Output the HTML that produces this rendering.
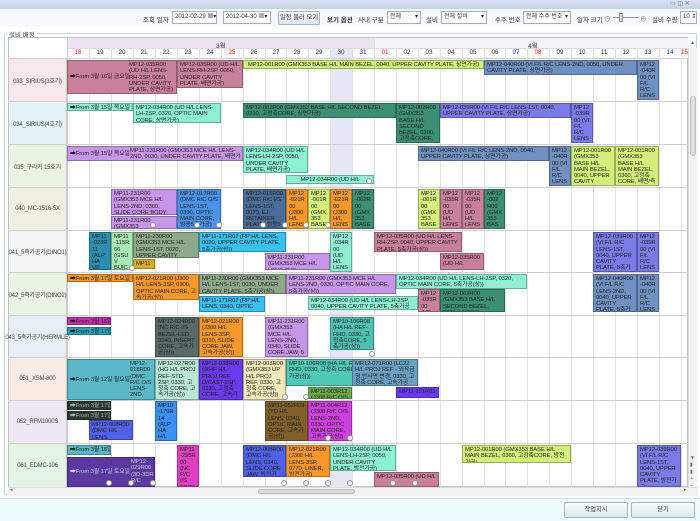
<!DOCTYPE html>
<html><head><meta charset="utf-8">
<style>
*{margin:0;padding:0;box-sizing:border-box}
body{width:700px;height:521px;overflow:hidden;background:#fff;font-family:"Liberation Sans","Noto Sans CJK KR",sans-serif;position:relative;color:#333}
.a{position:absolute}
.t{font-size:6.5px;white-space:nowrap}
.b{position:absolute;border:1px solid rgba(0,0,0,.28);font-size:5.9px;line-height:6.3px;padding:1px 2px 0;overflow:hidden;color:#222;overflow-wrap:anywhere;letter-spacing:-0.1px}
.vl{position:absolute;top:48px;height:439px;width:1px;background:#e2e2e2}
.hl{position:absolute;left:8px;width:680px;height:1px;background:#cfcfcf}
.lab{position:absolute;left:9px;width:58px;font-size:6px;display:flex;align-items:center;justify-content:center;color:#444;border-right:1px solid #ccc;white-space:nowrap;letter-spacing:-0.2px}
.dn{position:absolute;top:48px;height:10px;width:22px;font-size:6.3px;text-align:center;line-height:10px}
.inp{position:absolute;top:11px;height:13px;border:1px solid #aab;background:#fff;font-size:6px;line-height:11px;padding-left:2px;white-space:nowrap;overflow:hidden}
.btn{position:absolute;border:1px solid #a8b4c4;background:linear-gradient(#fafcff,#dde6f0);font-size:6.3px;text-align:center;border-radius:2px;white-space:nowrap;overflow:hidden}
.d{position:absolute;width:6px;height:6px;border-radius:50%;background:#fff;border:1px solid #999}
</style></head><body>
<div class="a" style="left:0;top:0;width:700px;height:9px;background:linear-gradient(#d6e2f0,#c2d2e6)"></div>
<div class="a t" style="left:670px;top:0;font-size:6px;color:#777">▭ ◫ ✕</div>
<div class="a" style="left:0;top:9px;width:700px;height:18px;background:#f7f9fc"></div>
<div class="a t" style="left:143px;top:14px">조회 일자</div>
<div class="inp" style="left:172px;width:45px">2012-02-29 ▦▾</div>
<div class="inp" style="left:223px;width:48px">2012-04-30 ▦▾</div>
<div class="btn" style="left:278px;top:11px;width:42px;height:14px;line-height:12px">일정 불러 오기</div>
<div class="a t" style="left:327px;top:14px;font-weight:bold">보기 옵션</div>
<div class="a t" style="left:358px;top:14px">사내 구분</div>
<div class="inp" style="left:387px;width:34px">전체 <span style="position:absolute;right:2px">▾</span></div>
<div class="a t" style="left:426px;top:14px">설비</div>
<div class="inp" style="left:441px;width:46px">전체 설비 <span style="position:absolute;right:2px">▾</span></div>
<div class="a t" style="left:495px;top:14px">수주 번호</div>
<div class="inp" style="left:523px;width:48px">전체 수주 번호<span style="position:absolute;right:2px">▾</span></div>
<div class="a t" style="left:577px;top:14px">일자 크기</div>
<div class="a t" style="left:604px;top:13px;color:#888">⊖</div>
<div class="a" style="left:613px;top:17px;width:26px;height:1px;background:#999"></div>
<div class="a" style="left:619px;top:13px;width:4px;height:9px;background:#dde;border:1px solid #889"></div>
<div class="a t" style="left:640px;top:13px;color:#888">⊕</div>
<div class="a t" style="left:652px;top:14px">설비 수량</div>
<div class="inp" style="left:680px;width:17px">10 ⇕</div>
<div class="a" style="left:4px;top:33px;width:693px;height:462px;border:1px solid #c8d2dc;border-radius:2px"></div>
<div class="a t" style="left:7px;top:29px;background:#fff;padding:0 2px">설비 배정</div>
<div class="a" style="left:8px;top:37px;width:680px;height:450px;border:1px solid #b8c0c8;background:#fff"></div>
<div class="a" style="left:67px;top:38px;width:307px;height:10px;background:#ece2f4"></div>
<div class="a" style="left:374px;top:38px;width:314px;height:10px;background:#f4f4f8"></div>
<div class="a t" style="left:216px;top:40px">3월</div>
<div class="a t" style="left:528px;top:40px">4월</div>
<div class="a" style="left:67px;top:48px;width:621px;height:10px;background:#fbfbfb"></div>
<div class="a" style="left:330px;top:48px;width:22px;height:439px;background:#e6e6f6"></div>
<div class="hl" style="top:48px;left:67px;width:621px;background:#ddd"></div>
<div class="hl" style="top:58px"></div>
<div class="vl" style="left:67px;top:38px;height:449px;background:#ccc"></div>
<div class="vl" style="left:89px"></div><div class="vl" style="left:111px"></div><div class="vl" style="left:133px"></div><div class="vl" style="left:155px"></div><div class="vl" style="left:177px"></div><div class="vl" style="left:199px"></div><div class="vl" style="left:221px"></div><div class="vl" style="left:243px"></div><div class="vl" style="left:265px"></div><div class="vl" style="left:286px"></div><div class="vl" style="left:308px"></div><div class="vl" style="left:330px"></div><div class="vl" style="left:352px"></div><div class="vl" style="left:374px;top:38px;height:449px"></div><div class="vl" style="left:396px"></div><div class="vl" style="left:418px"></div><div class="vl" style="left:440px"></div><div class="vl" style="left:462px"></div><div class="vl" style="left:484px"></div><div class="vl" style="left:505px"></div><div class="vl" style="left:527px"></div><div class="vl" style="left:549px"></div><div class="vl" style="left:571px"></div><div class="vl" style="left:593px"></div><div class="vl" style="left:615px"></div><div class="vl" style="left:637px"></div><div class="vl" style="left:659px"></div><div class="vl" style="left:681px"></div>
<div class="dn" style="left:67px;color:#e02020">18</div><div class="dn" style="left:89px">19</div><div class="dn" style="left:111px">20</div><div class="dn" style="left:133px">21</div><div class="dn" style="left:155px">22</div><div class="dn" style="left:177px">23</div><div class="dn" style="left:199px;color:#2020e0">24</div><div class="dn" style="left:221px;color:#e02020">25</div><div class="dn" style="left:243px">26</div><div class="dn" style="left:265px">27</div><div class="dn" style="left:286px">28</div><div class="dn" style="left:308px">29</div><div class="dn" style="left:330px">30</div><div class="dn" style="left:352px;color:#2020e0">31</div><div class="dn" style="left:374px;color:#e02020">01</div><div class="dn" style="left:396px">02</div><div class="dn" style="left:418px">03</div><div class="dn" style="left:440px">04</div><div class="dn" style="left:462px">05</div><div class="dn" style="left:484px">06</div><div class="dn" style="left:505px;color:#2020e0">07</div><div class="dn" style="left:527px;color:#e02020">08</div><div class="dn" style="left:549px">09</div><div class="dn" style="left:571px">10</div><div class="dn" style="left:593px">11</div><div class="dn" style="left:615px">12</div><div class="dn" style="left:637px">13</div><div class="dn" style="left:659px;color:#2020e0">14</div><div class="dn" style="left:681px;color:#e02020;width:7px;overflow:hidden">15</div>
<div class="lab" style="top:59px;height:42px;background:#f8e8ea">033_SIRIUS(3호기)</div>
<div class="lab" style="top:102px;height:42px;background:#e4f2f8">034_SIRIUS(4호기)</div>
<div class="lab" style="top:145px;height:42px;background:#eaf4e2">035_구라커 15호기</div>
<div class="lab" style="top:188px;height:42px;background:#f0f0e2">040_MC-1516-5X</div>
<div class="lab" style="top:231px;height:41px;background:#f4f4f4">041_5축가공기(DINO1)</div>
<div class="lab" style="top:273px;height:42px;background:#eaf4e4">042_5축가공기(DINO2)</div>
<div class="lab" style="top:316px;height:41px;background:#e6f0f4">043_5축가공기(HERMLE)</div>
<div class="lab" style="top:358px;height:42px;background:#f8ece4">051_XSM-800</div>
<div class="lab" style="top:401px;height:42px;background:#eee8f4">052_RFM1000S</div>
<div class="lab" style="top:444px;height:43px;background:#e4f4e4">061_EDMC-106</div>
<div class="hl" style="top:101px"></div><div class="hl" style="top:144px"></div><div class="hl" style="top:187px"></div><div class="hl" style="top:230px"></div><div class="hl" style="top:272px"></div><div class="hl" style="top:315px"></div><div class="hl" style="top:357px"></div><div class="hl" style="top:400px"></div><div class="hl" style="top:443px"></div>

<!-- row 033 -->
<div class="b" style="left:67px;top:60px;width:110px;height:34px;background:#c9819b"><span style="position:absolute;left:2px;top:13px;white-space:nowrap">➡From 3월 16일 금요일</span><span style="position:absolute;left:61px;top:1px;width:47px;background:#c9819b">MP12-035R00 (UD H/L LENS-RH-2SP, 0050, UNDER CAVITY PLATE, 상면가공)</span></div>
<div class="b" style="left:177px;top:60px;width:66px;height:28px;background:#c9819b">MP12-035R00 (UD H/L LENS-RH-2SP, 0050, UNDER CAVITY PLATE, 배면가공)</div>
<div class="b" style="left:243px;top:60px;width:241px;height:9px;background:#d2f07a;text-align:center;white-space:nowrap">MP12-001R00 (GMX353 BASE H/L MAIN BEZEL, 0040, UPPER CAVITY PLATE, 상면가공)</div>
<div class="b" style="left:484px;top:60px;width:153px;height:15px;background:#6f90c0">MP12-040R00 (VI F/L R/C LENS-2ND, 0050, UNDER CAVITY PLATE, 상면가공)</div>
<div class="b" style="left:637px;top:60px;width:22px;height:40px;background:#6f90c0">MP12-040R00 (VI F/L R/C LENS-2ND,</div>
<!-- row 034 -->
<div class="b" style="left:67px;top:103px;width:66px;height:8px;background:#8ef0d2;line-height:6px;white-space:nowrap">➡From 3월 15일 목요일 M</div>
<div class="b" style="left:133px;top:103px;width:88px;height:20px;background:#8ef0d2">MP12-034R00 (UD H/L LENS-LH-2SP, 0320, OPTIC MAIN CORE, 상면가공)</div>
<div class="b" style="left:243px;top:103px;width:153px;height:15px;background:#3c8f72">MP12-002R00 (GMX353 BASE H/L SECOND BEZEL, 0310, 고정축CORE, 상면가공)</div>
<div class="b" style="left:396px;top:103px;width:44px;height:40px;background:#3c8f72">MP12-002R00 (GMX353 BASE H/L SECOND BEZEL, 0300, 고정축CORE, 배면/측면 가공)</div>
<div class="b" style="left:440px;top:103px;width:131px;height:15px;background:#7b7be8">MP12-039R00 (VI F/L R/C LENS-1ST, 0040, UPPER CAVITY PLATE, 상면가공)</div>
<div class="b" style="left:571px;top:103px;width:22px;height:40px;background:#7b7be8">MP12-039R00 (VI F/L R/C LENS-1 ST,</div>
<!-- row 035 -->
<div class="b" style="left:67px;top:146px;width:176px;height:15px;background:#c896e8"><span style="position:absolute;left:2px;top:4px;white-space:nowrap">➡From 3월 15일 목요일</span><span style="position:absolute;left:62px;top:1px;width:112px">MP11-231R00 (GMX353 MCE H/L LENS-2ND, 0030, UNDER CAVITY PLATE, 배면가공)</span></div>
<div class="b" style="left:243px;top:146px;width:65px;height:27px;background:#8ef0d2">MP12-034R00 (UD H/L LENS-LH-2SP, 0050, UNDER CAVITY PLATE, 배면가공)</div>
<div class="b" style="left:286px;top:175px;width:88px;height:9px;background:#8ef0d2;white-space:nowrap;text-align:center">MP12-034R00 (UD H/L</div>
<div class="b" style="left:418px;top:146px;width:131px;height:15px;background:#6f90c0">MP12-040R00 (VI F/L R/C LENS-2ND, 0040, UPPER CAVITY PLATE, 상면가공)</div>
<div class="b" style="left:549px;top:146px;width:22px;height:40px;background:#6f90c0">MP12-040R00 (VI F/L R/C LENS-2ND,</div>
<div class="b" style="left:571px;top:146px;width:44px;height:40px;background:#d2f07a">MP12-001R00 (GMX353 BASE H/L MAIN BEZEL, 0040, UPPER CAVITY PLATE, 배면가</div>
<div class="b" style="left:615px;top:146px;width:44px;height:40px;background:#d2f07a">MP12-001R00 (GMX353 BASE H/L MAIN BEZEL, 0360, 고정축CORE, 배면/측면 가공)</div>
<!-- row 040 -->
<div class="b" style="left:111px;top:189px;width:66px;height:26px;background:#c896e8">MP11-231R00 (GMX353 MCE H/L LENS-2ND, 0360, SLIDE CORE BODY, 범용5축가공)</div>
<div class="b" style="left:111px;top:216px;width:66px;height:13px;background:#c896e8">MP11-231R00 (GMX353</div>
<div class="b" style="left:177px;top:189px;width:44px;height:40px;background:#4a92ea">MP12-017R00 (DMC R/C O/S LENS-1ST, 0330, OPTIC MAIN CORE, 범용5축가공)</div>
<div class="b" style="left:243px;top:189px;width:43px;height:40px;background:#4a6c98">MP12-015R00 (DMC R/C I/S LENS-1ST, 0070, EJ. RETAINER PLATE, 범용5축</div>
<div class="b" style="left:286px;top:189px;width:22px;height:40px;background:#f8982a">MP12-021R00 (J300 H/L LENS-</div>
<div class="b" style="left:308px;top:189px;width:22px;height:40px;background:#d2f07a">MP12-001R00 (GMX353 BASE</div>
<div class="b" style="left:330px;top:189px;width:22px;height:40px;background:#f8982a">MP12-021R00 (J300 H/L LENS-</div>
<div class="b" style="left:352px;top:189px;width:22px;height:40px;background:#3c8f72">MP12-002R00 (GMX353 BASE</div>
<div class="b" style="left:418px;top:189px;width:22px;height:40px;background:#d2f07a">MP12-001R00 (GMX353 BASE</div>
<div class="b" style="left:440px;top:189px;width:22px;height:40px;background:#c9819b">MP12-035R00 (UD H/L LENS-RH-2SP,</div>
<div class="b" style="left:462px;top:189px;width:22px;height:40px;background:#c9819b">MP12-035R00 (UD H/L LENS-RH-2SP,</div>
<div class="b" style="left:484px;top:189px;width:21px;height:40px;background:#3c8f72">MP12-002R00 (GMX353 BASE</div>
<!-- row 041 -->
<div class="b" style="left:89px;top:232px;width:22px;height:38px;background:#2a90b2">MP11-023R11 (ALPHA UP H/L</div>
<div class="b" style="left:111px;top:232px;width:22px;height:38px;background:#a8e8b4">MP11-115R06 (GSUV BUICK H/L</div>
<div class="b" style="left:133px;top:232px;width:66px;height:26px;background:#8eaa8a">MP11-230R00 (GMX353 MCE H/L LENS-1ST, 0020, UPPER CAVITY PLATE, 5축가공(상))</div>
<div class="b" style="left:133px;top:259px;width:22px;height:10px;background:#d8b020">MP11-</div>
<div class="b" style="left:199px;top:232px;width:87px;height:20px;background:#38c0f0">MP11-171R02 (RP H/L LENS, 0020, UPPER CAVITY PLATE, 5축가공(상))</div>
<div class="b" style="left:265px;top:253px;width:65px;height:17px;background:#c896e8">MP11-231R00 (GMX353 MCE H/L LENS-2ND,</div>
<div class="b" style="left:330px;top:232px;width:22px;height:40px;background:#8ef0d2">MP12-034R00 (UD H/L LENS-LH-2SP,</div>
<div class="b" style="left:374px;top:232px;width:88px;height:20px;background:#c9819b">MP12-035R00 (UD H/L LENS-RH-2SP, 0040, UPPER CAVITY PLATE, 5축가공(상))</div>
<div class="b" style="left:440px;top:253px;width:44px;height:17px;background:#c9819b">MP12-035R00 (UD H/L</div>
<div class="b" style="left:593px;top:232px;width:44px;height:40px;background:#7b7be8">MP12-039R00 (VI F/L R/C LENS-1ST, 0040, UPPER CAVITY PLATE, 5축가공(상))</div>
<div class="b" style="left:637px;top:232px;width:22px;height:40px;background:#7b7be8">MP12-039R00 (VI F/L R/C LENS-1 ST,</div>
<!-- row 042 -->
<div class="b" style="left:67px;top:274px;width:66px;height:8px;background:#f8982a;line-height:6px;white-space:nowrap">➡From 3월 17일 토요일 M</div>
<div class="b" style="left:133px;top:274px;width:66px;height:26px;background:#f8982a">MP12-021R00 (J300 H/L LENS-3SP, 0300, OPTIC MAIN CORE, 고속가공(상))</div>
<div class="b" style="left:199px;top:274px;width:87px;height:20px;background:#8eaa8a">MP11-230R00 (GMX353 MCE H/L LENS-1ST, 0030, UNDER CAVITY PLATE, 5축가공(상))</div>
<div class="b" style="left:286px;top:274px;width:110px;height:20px;background:#c896e8">MP11-231R00 (GMX353 MCE H/L LENS-2ND, 0330, OPTIC MAIN CORE, 5축가공(상))</div>
<div class="b" style="left:396px;top:274px;width:131px;height:15px;background:#8ef0d2">MP12-034R00 (UD H/L LENS-LH-2SP, 0320, OPTIC MAIN CORE, 5축가공(상))</div>
<div class="b" style="left:199px;top:296px;width:66px;height:16px;background:#38c0f0">MP11-171R02 (RP H/L LENS, 0340, OPTIC MAIN</div>
<div class="b" style="left:308px;top:296px;width:110px;height:14px;background:#8ef0d2">MP12-034R00 (UD H/L LENS-LH-2SP, 0040, UPPER CAVITY PLATE, 5축가공(상))</div>
<div class="b" style="left:418px;top:289px;width:22px;height:23px;background:#c9819b">MP12-035R00 (UD</div>
<div class="b" style="left:440px;top:289px;width:65px;height:23px;background:#3c8f72">MP12-002R00 (GMX353 BASE H/L SECOND BEZEL, 0031, UNDER</div>
<div class="b" style="left:593px;top:274px;width:44px;height:38px;background:#6f90c0">MP12-040R00 (VI F/L R/C LENS-2ND, 0040, UPPER CAVITY PLATE, 5축가공(상))</div>
<div class="b" style="left:637px;top:274px;width:22px;height:38px;background:#6f90c0">MP12-040R00 (VI F/L R/C LENS-2ND,</div>
<!-- row 043 -->
<div class="b" style="left:67px;top:317px;width:44px;height:8px;background:#c830b0;line-height:6px;white-space:nowrap">➡From 3월 16일</div>
<div class="b" style="left:67px;top:327px;width:44px;height:8px;background:#2aa0b8;line-height:6px;white-space:nowrap">➡From 3월 17일</div>
<div class="b" style="left:155px;top:317px;width:44px;height:40px;background:#5a6a6a">MP12-024R00 (NC R/C I/S BEZEL-LED, 0340, INSERT CORE, 고속가공(상))</div>
<div class="b" style="left:199px;top:317px;width:44px;height:40px;background:#f8982a">MP12-021R00 (J300 H/L LENS-3SP, 0310, SLIDE CORE JAW, 고속가공(상))</div>
<div class="b" style="left:265px;top:317px;width:43px;height:40px;background:#c896e8">MP11-231R00 (GMX353 MCE H/L LENS-2ND, 0340, SLIDE CORE JAW, 5축가공(상))</div>
<div class="b" style="left:330px;top:317px;width:44px;height:33px;background:#50c0b4">MP10-106R08 (HA H/L REF-RHD, 0330, 고정축CORE, 5축가공(상))</div>
<!-- row 051 -->
<div class="b" style="left:67px;top:359px;width:88px;height:41px;background:#5ab8c8"><span style="position:absolute;left:2px;top:17px;white-space:nowrap">➡From 3월 12일 월요일</span><span style="position:absolute;left:62px;top:1px;width:24px;background:#5ab8c8">MP12-018R00 (DMC R/C O/S LENS-2ND, 0330, OPTIC</span></div>
<div class="b" style="left:155px;top:359px;width:44px;height:41px;background:#b8e8d4">MP12-027R00 (HG H/L PROJ REF-STD-2SP, 0330, 고정축 CORE, 고속가공(상))</div>
<div class="b" style="left:199px;top:359px;width:44px;height:41px;background:#6a3af0">MP12-038R00 (J64F H/L PROJ REF D/CAST-2SP, 0330, 고정축 CORE, 고속가공</div>
<div class="b" style="left:243px;top:359px;width:43px;height:41px;background:#f0e8b8">MP12-003R00 (GMX353 UP H/L PROJ REF, 0330, 고정축 CORE, 고속가공(상))</div>
<div class="b" style="left:286px;top:359px;width:88px;height:27px;background:#50c8b8">MP10-106R08 (HA H/L REF-RHD, 0330, 고정축 CORE, 고속가공(상))</div>
<div class="b" style="left:308px;top:387px;width:44px;height:12px;background:#6aa84a">MP11-003R12 (J308 R/C O/S</div>
<div class="b" style="left:352px;top:359px;width:66px;height:27px;background:#6aa0c2">MR12-071R00 (LC22 H/L PROJ REF - 외작금형 반사면 변경, 0330, 고정축 CORE, 고속가공(상))</div>
<div class="b" style="left:396px;top:387px;width:43px;height:11px;background:#6a3af0">MP11-221R01</div>
<!-- row 052 -->
<div class="b" style="left:67px;top:401px;width:44px;height:9px;background:#2a3a30;color:#aaa;white-space:nowrap">➡From 3월 17일</div>
<div class="b" style="left:67px;top:411px;width:44px;height:9px;background:#2a3a30;color:#aaa;white-space:nowrap">➡From 3월 17일</div>
<div class="b" style="left:89px;top:420px;width:44px;height:20px;background:#5060e8">MP12-008R00 (DMC H/L LENS,</div>
<div class="b" style="left:155px;top:401px;width:22px;height:40px;background:#3a90f8">MP10-179R14 (ALPHA H/L LENS-2</div>
<div class="b" style="left:265px;top:401px;width:43px;height:40px;background:#806028">MP11-052R09 (YD H/L LENS, 0340, OPTIC MAIN CORE, 고속가공(상))</div>
<div class="b" style="left:308px;top:401px;width:44px;height:40px;background:#d040e0">MP11-004R12 (J308 R/C O/S LENS-2ND, 0330, OPTIC MAIN CORE, 고속가공(상))</div>
<!-- row 061 -->
<div class="b" style="left:67px;top:445px;width:44px;height:10px;background:#5ab8c8;white-space:nowrap">➡From 3월 16일</div>
<div class="b" style="left:67px;top:457px;width:88px;height:30px;background:#5a3aa0;color:#ccc"><span style="position:absolute;left:2px;top:11px;white-space:nowrap">➡From 3월 17일 토요일</span><span style="position:absolute;left:63px;top:1px;width:23px;background:#5a3aa0">MP12-029R00 (3D-3DR R/C</span></div>
<div class="b" style="left:177px;top:445px;width:22px;height:42px;background:#e040c0">MP11-235R00 (NC R/C I/S BEZEL-BULB,</div>
<div class="b" style="left:243px;top:445px;width:43px;height:32px;background:#5060e8">MP12-008R00 (DMC H/L LENS, 0340, SLIDE CORE JAW, 방전가공)</div>
<div class="b" style="left:286px;top:445px;width:44px;height:32px;background:#f8982a">MP12-021R00 (J300 H/L LENS-3SP, 0770, LINER, 방전가공)</div>
<div class="b" style="left:330px;top:445px;width:66px;height:26px;background:#8ef0d2">MP12-034R00 (UD H/L LENS-LH-2SP, 0050, UNDER CAVITY PLATE, 방전가공)</div>
<div class="b" style="left:374px;top:472px;width:65px;height:15px;background:#c9819b">MP12-035R00 (UD H/L</div>
<div class="b" style="left:462px;top:445px;width:109px;height:18px;background:#d2f07a">MP12-001R00 (GMX353 BASE H/L MAIN BEZEL, 0360, 고정축CORE, 방전가공)</div>
<div class="b" style="left:637px;top:445px;width:44px;height:42px;background:#7b7be8">MP12-039R00 (VI F/L R/C LENS-1ST, 0040, UPPER CAVITY PLATE, 방전가공)</div>
<!-- small dots -->
<div class="d" style="left:366px;top:178px"></div><div class="d" style="left:150px;top:222px"></div><div class="d" style="left:194px;top:222px"></div><div class="d" style="left:216px;top:222px"></div><div class="d" style="left:260px;top:222px"></div><div class="d" style="left:282px;top:222px"></div><div class="d" style="left:303px;top:222px"></div><div class="d" style="left:325px;top:222px"></div><div class="d" style="left:129px;top:265px"></div><div class="d" style="left:369px;top:351px"></div><div class="d" style="left:282px;top:394px"></div><div class="d" style="left:303px;top:394px"></div><div class="d" style="left:325px;top:435px"></div><div class="d" style="left:347px;top:435px"></div><div class="d" style="left:106px;top:480px"></div><div class="d" style="left:128px;top:480px"></div><div class="d" style="left:150px;top:480px"></div><div class="d" style="left:281px;top:480px"></div><div class="d" style="left:303px;top:480px"></div><div class="d" style="left:325px;top:480px"></div><div class="d" style="left:347px;top:480px"></div><div class="d" style="left:390px;top:480px"></div><div class="d" style="left:412px;top:480px"></div>
<!-- vertical scrollbar -->
<div class="a" style="left:688px;top:48px;width:9px;height:439px;background:#f2f2f2;border-left:1px solid #ddd"></div>
<div class="a" style="left:690px;top:96px;width:6px;height:60px;background:#e0e0e0;border:1px solid #bbb;border-radius:3px"></div>
<div class="a t" style="left:690px;top:40px;font-size:5px;color:#666">▲</div>
<div class="a t" style="left:690px;top:455px;font-size:5px;color:#666;line-height:7px">▼<br>▮<br>▮<br>+<br>−</div>
<!-- horizontal scrollbar -->
<div class="a" style="left:8px;top:487px;width:690px;height:9px;background:#f2f2f2;border-top:1px solid #ddd"></div>
<div class="a" style="left:258px;top:489px;width:97px;height:5px;background:#dcdcdc;border:1px solid #bbb;border-radius:3px"></div>
<div class="a t" style="left:10px;top:487px;font-size:5px;color:#666">◂</div>
<div class="a t" style="left:684px;top:487px;font-size:5px;color:#666">▸</div>
<!-- bottom panel -->
<div class="a" style="left:0;top:498px;width:700px;height:23px;background:#eefcff;border-top:1px solid #cde"></div>
<div class="btn" style="left:564px;top:502px;width:64px;height:16px;line-height:14px">작업지시</div>
<div class="btn" style="left:631px;top:502px;width:64px;height:16px;line-height:14px">닫기</div>
</body></html>
